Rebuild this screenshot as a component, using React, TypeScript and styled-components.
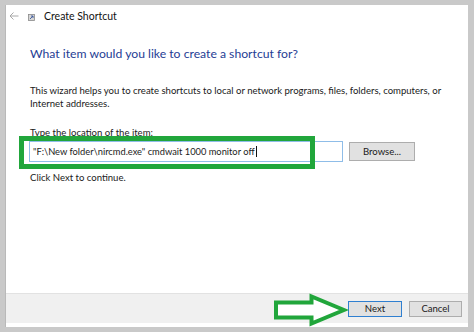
import styled, { createGlobalStyle } from 'styled-components';

const GlobalStyle = createGlobalStyle`
    html, body {
        margin: 0;
        padding: 0;
        background: #c9c9c9;
    }
    body {
        font-family: Lato, "Noto Sans", sans-serif;
        color: #1a1a1a;
    }
`;

export default function App() {
    return (
        <>
            <GlobalStyle />
            <Page>
                <Window>
                    <TitleBar>
                        <BackArrow width="10" height="8" viewBox="0 0 10 8">
                            <path d="M9.5 4H1M4.5 0.5L1 4l3.5 3.5" fill="none" stroke="#a8a8a8" strokeWidth="1" />
                        </BackArrow>
                        <AppIcon width="7" height="7" viewBox="0 0 7 7">
                            <rect x="0.5" y="0.5" width="6" height="6" fill="#d6d6d6" stroke="#8a8a8a" strokeWidth="0.8" />
                            <path d="M2 5L5 2M3 2h2v2" fill="none" stroke="#3d5a9e" strokeWidth="0.9" />
                        </AppIcon>
                        <WindowTitle>Create Shortcut</WindowTitle>
                    </TitleBar>

                    <Content>
                        <Heading>What item would you like to create a shortcut for?</Heading>
                        <Paragraph>
                            This wizard helps you to create shortcuts to local or network programs, files, folders, computers, or
                            <br />
                            Internet addresses.
                        </Paragraph>
                        <FieldLabel>Type the location of the item:</FieldLabel>
                        <FieldRow>
                            <LocationInput>
                                "F:\New folder\nircmd.exe" cmdwait 1000 monitor off
                                <Caret />
                            </LocationInput>
                            <Button $width={66} $height={19}>Browse...</Button>
                            <Highlight />
                        </FieldRow>
                        <Hint>Click Next to continue.</Hint>
                    </Content>

                    <Footer>
                        <PointerArrow width="76" height="34" viewBox="0 0 76 34">
                            <path
                                d="M3 9.5H38.5V3.5L71 17L38.5 30.5V24.5H3Z"
                                fill="#ffffff"
                                stroke="#21a63b"
                                strokeWidth="4"
                                strokeLinejoin="miter"
                            />
                        </PointerArrow>
                        <Button $primary $width={54} $height={16}>Next</Button>
                        <Button $width={53} $height={16}>Cancel</Button>
                    </Footer>
                </Window>
            </Page>
        </>
    );
}

const Page = styled.div`
    width: 474px;
    height: 332px;
    padding: 5px 6px 5px 5px;
    box-sizing: border-box;
`;

const Window = styled.div`
    width: 463px;
    height: 322px;
    background: #ffffff;
    display: flex;
    flex-direction: column;
    border-left: 1px solid #b9b9b9;
    box-sizing: border-box;
`;

const TitleBar = styled.div`
    height: 22px;
    display: flex;
    align-items: center;
    padding-left: 3px;
    flex-shrink: 0;
`;

const BackArrow = styled.svg`
    margin-right: 9px;
`;

const AppIcon = styled.svg`
    margin-right: 9px;
    margin-top: 3px;
`;

const WindowTitle = styled.span`
    font-size: 10.5px;
    color: #111;
`;

const Content = styled.div`
    flex: 1;
    padding-left: 24px;
    display: flex;
    flex-direction: column;
`;

const Heading = styled.h1`
    margin: 17px 0 0;
    font-size: 12.2px;
    line-height: 20px;
    font-weight: 400;
    color: #1f3d94;
`;

const Paragraph = styled.p`
    margin: 20px 0 0;
    font-size: 9.55px;
    line-height: 13px;
    color: #1a1a1a;
    white-space: nowrap;
`;

const FieldLabel = styled.div`
    margin-top: 16px;
    font-size: 9.55px;
    line-height: 13px;
`;

const FieldRow = styled.div`
    position: relative;
    margin-top: 2px;
    margin-left: -1px;
    display: flex;
    align-items: center;
    gap: 6px;
`;

const LocationInput = styled.div`
    width: 314px;
    height: 21px;
    box-sizing: border-box;
    border: 1px solid #8fbde8;
    padding-left: 3px;
    display: flex;
    align-items: center;
    font-size: 9.3px;
    white-space: pre;
`;

const Caret = styled.span`
    display: inline-block;
    width: 1px;
    height: 11px;
    background: #111;
    margin-left: 1px;
`;

const Highlight = styled.div`
    position: absolute;
    left: -10px;
    top: -5px;
    width: 296px;
    height: 33px;
    box-sizing: border-box;
    border: 5px solid #21a63b;
    pointer-events: none;
`;

const Button = styled.div<{ $primary?: boolean; $width: number; $height: number }>`
    width: ${({ $width }) => $width}px;
    height: ${({ $height }) => $height}px;
    box-sizing: border-box;
    background: #e1e1e1;
    border: 1px solid ${({ $primary }) => ($primary ? '#2f7fd0' : '#adadad')};
    display: flex;
    align-items: center;
    justify-content: center;
    font-size: 9.55px;
    color: #1a1a1a;
`;

const Hint = styled.div`
    margin-top: 9px;
    font-size: 9.55px;
    line-height: 13px;
`;

const Footer = styled.div`
    position: relative;
    height: 30px;
    margin-bottom: 4px;
    flex-shrink: 0;
    background: #f0f0f0;
    border-top: 1px solid #e2e2e2;
    box-sizing: border-box;
    display: flex;
    align-items: center;
    justify-content: flex-end;
    gap: 7px;
    padding-right: 6px;
`;

const PointerArrow = styled.svg`
    position: absolute;
    left: 267px;
    top: -1px;
`;
